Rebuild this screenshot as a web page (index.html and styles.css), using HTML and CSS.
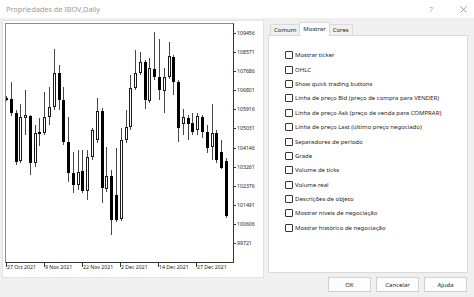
FILE: index.html
```html
<!DOCTYPE html>
<html lang="pt">
<head>
    <meta charset="UTF-8">
    <title>Propriedades de IBOV,Daily</title>
    <link rel="stylesheet" href="styles.css">
</head>
<body>
    <div class="titlebar">
        <span class="title">Propriedades de IBOV,Daily</span>
        <span class="help">?</span>
        <svg class="close" width="7" height="7" viewBox="0 0 7 7">
            <path d="M0.5 0.5 L6.5 6.5 M6.5 0.5 L0.5 6.5" stroke="#8a8a8a" stroke-width="0.8"/>
        </svg>
    </div>
    <div class="content">
        <div class="chart-box">
            <svg id="chart" width="262" height="258" viewBox="2 20 262 258">
                <g id="candles"></g>
                <rect class="frame" x="5.5" y="23.5" width="228" height="239"/>
                <path class="axis" d="M233.5 23.5 V262.5 H5.5"/>
                <g id="labels"></g>
            </svg>
        </div>
        <div class="side">
            <div class="tabs">
                <span class="tab">Comum</span>
                <span class="tab active">Mostrar</span>
                <span class="tab">Cores</span>
            </div>
            <div class="tab-body">
                <label class="opt"><input type="checkbox">Mostrar ticker</label>
                <label class="opt"><input type="checkbox">OHLC</label>
                <label class="opt"><input type="checkbox">Show quick trading buttons</label>
                <label class="opt"><input type="checkbox">Linha de preço Bid (preço de compra para VENDER)</label>
                <label class="opt"><input type="checkbox">Linha de preço Ask (preço de venda para COMPRAR)</label>
                <label class="opt"><input type="checkbox">Linha de preço Last (último preço negociado)</label>
                <label class="opt"><input type="checkbox">Separadores de período</label>
                <label class="opt"><input type="checkbox">Grade</label>
                <label class="opt"><input type="checkbox">Volume de ticks</label>
                <label class="opt"><input type="checkbox">Volume real</label>
                <label class="opt"><input type="checkbox">Descrições de objeto</label>
                <label class="opt"><input type="checkbox">Mostrar níveis de negociação</label>
                <label class="opt"><input type="checkbox">Mostrar histórico de negociação</label>
            </div>
            <div class="btn-row">
                <button>OK</button>
                <button>Cancelar</button>
                <button>Ajuda</button>
            </div>
        </div>
    </div>

<script>
    (function () {
        var NS = "http://www.w3.org/2000/svg",
            g_candles = document.getElementById("candles"),
            g_labels = document.getElementById("labels");

        // [corpo topo, corpo base, pavio topo, pavio base, baixa?]
        var data = [
            [98, 100, 96, 101, 1],
            [99, 113, 82, 116, 1],
            [113, 162, 110, 165, 1],
            [117, 161, 104, 163, 0],
            [115, 118, 90, 135, 0],
            [116, 163, 115, 175, 1],
            [133, 163, 125, 167, 0],
            [132, 134, 118, 146, 1],
            [117, 133, 92, 135, 0],
            [107, 117, 87, 125, 0],
            [73, 107, 49, 110, 0],
            [73, 100, 65, 110, 1],
            [100, 142, 87, 145, 1],
            [142, 173, 117, 182, 1],
            [173, 185, 152, 193, 1],
            [172, 185, 150, 190, 0],
            [171, 191, 150, 193, 1],
            [157, 191, 150, 200, 0],
            [130, 157, 128, 160, 0],
            [111, 140, 98, 143, 0],
            [111, 188, 108, 203, 1],
            [176, 189, 147, 192, 0],
            [176, 220, 170, 235, 1],
            [195, 220, 148, 222, 1],
            [140, 219, 128, 221, 0],
            [127, 140, 110, 143, 0],
            [88, 127, 75, 130, 0],
            [73, 88, 50, 90, 0],
            [62, 73, 52, 75, 0],
            [62, 100, 60, 109, 1],
            [68, 101, 58, 103, 0],
            [69, 77, 32, 80, 1],
            [77, 90, 39, 100, 1],
            [77, 91, 68, 113, 0],
            [56, 77, 42, 79, 0],
            [57, 82, 55, 95, 1],
            [82, 128, 80, 142, 1],
            [117, 124, 109, 135, 0],
            [118, 124, 115, 140, 1],
            [123, 132, 113, 135, 1],
            [116, 130, 113, 135, 0],
            [117, 132, 115, 138, 1],
            [132, 148, 125, 153, 1],
            [133, 147, 104, 160, 0],
            [133, 160, 130, 163, 1],
            [152, 168, 140, 169, 1],
            [161, 216, 158, 218, 1]
        ];

        function make(name, attrs, parent) {
            var node = document.createElementNS(NS, name);
            for (var k in attrs) {
                node.setAttribute(k, attrs[k]);
            }
            parent.appendChild(node);
            return node;
        }

        for (var i = 0; i < data.length; i++) {
            var d = data[i],
                cx = Math.round(6 + i * 4.78);
            make("rect", {x: cx, y: d[2], width: 1, height: d[3] - d[2], "class": "wick"}, g_candles);
            if (d[4]) {
                make("rect", {x: cx - 1, y: d[0], width: 3, height: d[1] - d[0], "class": "bear"}, g_candles);
            } else {
                make("rect", {x: cx - 0.5, y: d[0] + 0.5, width: 2, height: d[1] - d[0] - 1, "class": "bull"}, g_candles);
            }
        }

        // escala de preços
        for (var j = 0; j < 12; j++) {
            var y = Math.round(33 + j * 19.09);
            make("path", {d: "M233 " + (y + 0.5) + " H236", "class": "tick"}, g_labels);
            var t = make("text", {x: 237, y: y + 2, "class": "lbl"}, g_labels);
            t.textContent = 109456 - j * 885;
        }

        // datas
        var dates = ["27 Oct 2021", "9 Nov 2021", "22 Nov 2021", "2 Dec 2021", "14 Dec 2021", "27 Dec 2021"];
        for (var n = 0; n < dates.length; n++) {
            var x = 6 + n * 38;
            make("path", {d: "M" + (x + 0.5) + " 263 V267", "class": "tick"}, g_labels);
            var s = make("text", {x: x + 1, y: 269, "class": "lbl"}, g_labels);
            s.textContent = dates[n];
        }
    })()
</script>
</body>
</html>
```

FILE: styles.css
```css
*{
    margin: 0;
    padding: 0;
    box-sizing: border-box;
}
body{
    width: 474px;
    height: 297px;
    overflow: hidden;
    background-color: #f0f0f0;
    font-family: "Noto Sans", sans-serif;
    font-size: 6px;
    color: #1e1e1e;
}
.titlebar{
    height: 18px;
    background-color: #ffffff;
    display: flex;
    align-items: center;
    padding: 0 7px 0 6px;
    color: #9a9a9a;
    font-size: 7.3px;
}
.title{
    flex: 1;
}
.help{
    margin-right: 27px;
}
.content{
    display: flex;
    gap: 4px;
    padding: 2px 6px 0 2px;
}
.chart-box{
    width: 262px;
    height: 258px;
    background-color: #ffffff;
    outline: 1px solid #e2e2e2;
    outline-offset: -1px;
}
.chart-box svg{
    display: block;
}
.frame{
    fill: none;
    stroke: #8c8c8c;
}
.axis,.tick{
    fill: none;
    stroke: #333333;
}
.wick{
    fill: #474747;
}
.bear{
    fill: #000000;
}
.bull{
    fill: #ffffff;
    stroke: #1a1a1a;
}
.lbl{
    font-family: "Noto Sans", sans-serif;
    font-size: 5.2px;
    fill: #222222;
}
.side{
    width: 200px;
    padding-top: 2px;
    display: flex;
    flex-direction: column;
}
.tabs{
    display: flex;
    align-items: flex-end;
    height: 13px;
    padding-left: 2px;
}
.tab{
    height: 11px;
    line-height: 10px;
    padding: 0 3px;
    border: 1px solid #dadada;
    border-bottom: none;
    margin-right: -1px;
}
.tab.active{
    height: 14px;
    line-height: 12px;
    background-color: #ffffff;
    margin-bottom: -1px;
    position: relative;
    z-index: 1;
}
.tab-body{
    height: 238px;
    background-color: #ffffff;
    border: 1px solid #dadada;
    padding: 12px 0 0 16px;
}
.opt{
    display: flex;
    align-items: center;
    height: 14.4px;
    white-space: nowrap;
}
.opt input{
    appearance: none;
    width: 8px;
    height: 8px;
    border: 1px solid #333333;
    border-radius: 1px;
    background-color: #ffffff;
    margin-right: 2px;
}
.btn-row{
    display: flex;
    justify-content: flex-end;
    gap: 5px;
    margin-top: 4px;
    padding-right: 1px;
}
button{
    width: 43px;
    height: 15px;
    font: inherit;
    color: #1e1e1e;
    background-color: #fdfdfd;
    border: 1px solid #d0d0d0;
}
```
